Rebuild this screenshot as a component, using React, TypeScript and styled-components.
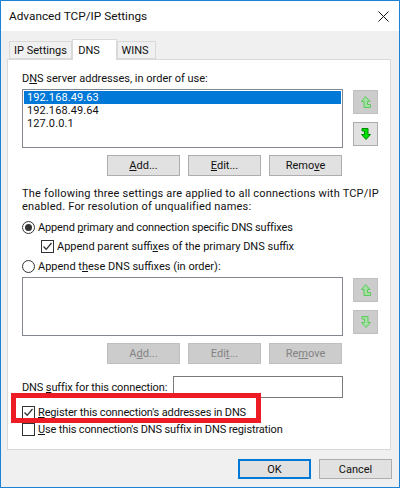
import styled, { createGlobalStyle } from "styled-components";

const GlobalStyle = createGlobalStyle`
  html, body {
    margin: 0;
    padding: 0;
    background: #f0f0f0;
  }
  * {
    box-sizing: border-box;
  }
`;

const Win = styled.div`
  position: relative;
  width: 400px;
  height: 488px;
  display: flex;
  flex-direction: column;
  background: #f0f0f0;
  border: 1px solid #1883d7;
  font-family: Roboto, "Liberation Sans", sans-serif;
  font-size: 11px;
  line-height: 13px;
  color: #111;
`;

const TitleBar = styled.div`
  height: 30px;
  display: flex;
  align-items: center;
  justify-content: space-between;
  background: #fff;
  padding: 0 10px 0 8px;
  font-size: 11.8px;
`;

const TabStrip = styled.div`
  display: flex;
  align-items: flex-end;
  height: 28px;
  margin-left: 8px;
`;

const Tab = styled.div<{ $active?: boolean; $w: number; $shift?: number }>`
  position: relative;
  width: ${(p) => p.$w}px;
  height: ${(p) => (p.$active ? 21 : 18)}px;
  margin-bottom: ${(p) => (p.$active ? -1 : 0)}px;
  padding-right: ${(p) => p.$shift || 0}px;
  display: flex;
  align-items: center;
  justify-content: center;
  background: ${(p) => (p.$active ? "#fff" : "#f0f0f0")};
  border: 1px solid #d9d9d9;
  border-bottom: ${(p) => (p.$active ? "none" : "1px solid #d9d9d9")};
  z-index: ${(p) => (p.$active ? 1 : 0)};
`;

const Panel = styled.div`
  width: 384px;
  height: 391px;
  margin-left: 6px;
  padding: 12px 0 0 14px;
  background: #fff;
  border: 1px solid #d9d9d9;
  display: flex;
  flex-direction: column;
`;

const Label = styled.div`
  height: 13px;
  white-space: nowrap;
`;

const ListRow = styled.div<{ $top: number }>`
  display: flex;
  gap: 10px;
  margin-top: ${(p) => p.$top}px;
`;

const ListBox = styled.div`
  width: 321px;
  height: 59px;
  padding: 1px;
  background: #fff;
  border: 1px solid #828790;
`;

const ListItem = styled.div<{ $selected?: boolean }>`
  height: 13px;
  padding-left: 3px;
  line-height: 13px;
  letter-spacing: 0.1px;
  color: ${(p) => (p.$selected ? "#fff" : "#111")};
  background: ${(p) => (p.$selected ? "#0078d7" : "transparent")};
`;

const ArrowColumn = styled.div`
  display: flex;
  flex-direction: column;
  gap: 8px;
  padding-top: 1px;
`;

const ArrowButton = styled.div<{ $dim?: boolean }>`
  width: 25px;
  height: 24px;
  display: flex;
  align-items: center;
  justify-content: center;
  background: ${(p) => (p.$dim ? "#cccccc" : "#e1e1e1")};
  border: 1px solid ${(p) => (p.$dim ? "#bfbfbf" : "#adadad")};
`;

const ButtonRow = styled.div`
  display: flex;
  justify-content: flex-end;
  gap: 8px;
  width: 320px;
  margin-top: 7px;
`;

const Button = styled.div<{ $disabled?: boolean; $primary?: boolean }>`
  width: 73px;
  height: 21px;
  display: flex;
  align-items: center;
  justify-content: center;
  background: ${(p) => (p.$disabled ? "#cccccc" : "#e1e1e1")};
  color: ${(p) => (p.$disabled ? "#838383" : "#111")};
  border: ${(p) =>
    p.$primary ? "2px solid #0078d7" : p.$disabled ? "1px solid #bfbfbf" : "1px solid #adadad"};
`;

const Para = styled.div`
  margin-top: 11px;
  white-space: nowrap;
  letter-spacing: 0.2px;
`;

const OptionRow = styled.div<{ $top: number; $indent?: number; $track?: number }>`
  display: flex;
  align-items: center;
  gap: 3px;
  height: 13px;
  margin-top: ${(p) => p.$top}px;
  margin-left: ${(p) => p.$indent || 0}px;
  letter-spacing: ${(p) => p.$track || 0}px;
  white-space: nowrap;
`;

const Radio = styled.span<{ $on?: boolean }>`
  width: 13px;
  height: 13px;
  flex: none;
  border-radius: 50%;
  border: 1px solid #333;
  background: #fff;
  display: flex;
  align-items: center;
  justify-content: center;
  &::after {
    content: "";
    width: 7px;
    height: 7px;
    border-radius: 50%;
    background: ${(p) => (p.$on ? "#333" : "transparent")};
  }
`;

const Check = styled.span`
  width: 13px;
  height: 13px;
  flex: none;
  border: 1px solid #333;
  background: #fff;
  display: flex;
`;

const SuffixRow = styled.div`
  display: flex;
  align-items: center;
  justify-content: space-between;
  width: 321px;
  height: 22px;
  margin-top: 12px;
  letter-spacing: -0.12px;
  white-space: nowrap;
`;

const SuffixInput = styled.div`
  width: 170px;
  height: 22px;
  background: #fff;
  border: 1px solid #7a7a7a;
`;

const Footer = styled.div`
  display: flex;
  justify-content: flex-end;
  gap: 8px;
  margin-top: 9px;
  padding-right: 7px;
`;

const DialogButton = styled(Button)`
  height: 20px;
`;

const Highlight = styled.div`
  position: absolute;
  left: 10px;
  top: 392px;
  width: 250px;
  height: 30px;
  border: 5px solid #ed1c24;
  pointer-events: none;
`;

const Key = styled.u`
  text-underline-offset: 1px;
`;

const CloseIcon = () => (
  <svg width="11" height="11" viewBox="0 0 11 11">
    <path d="M0.5 0.5L10.5 10.5M10.5 0.5L0.5 10.5" stroke="#111" strokeWidth="1" fill="none" />
  </svg>
);

const Tick = () => (
  <svg width="11" height="11" viewBox="0 0 11 11">
    <path d="M1.5 5.5L4.2 8.3L9.5 2" stroke="#333" strokeWidth="1.3" fill="none" />
  </svg>
);

const ArrowIcon = ({ down, pale }: { down?: boolean; pale?: boolean }) => (
  <svg width="10" height="12" viewBox="0 0 10 12">
    <path
      d={
        down
          ? "M1 0.5H7V6.5H9.5L5 11.5L0.5 6.5H3.5V3H1Z"
          : "M4.5 0.5L9 5.5H6.5V8.5H9.5V11.5H3V5.5H0.5Z"
      }
      fill={pale || !down ? "#a5dfa5" : "#00e000"}
      stroke={pale || !down ? "#5acb5a" : "#008a00"}
      strokeWidth="1"
    />
  </svg>
);

const App = () => {
  return (
    <>
      <GlobalStyle />
      <Win>
        <TitleBar>
          <span>Advanced TCP/IP Settings</span>
          <CloseIcon />
        </TitleBar>
        <TabStrip>
          <Tab $w={63}>IP Settings</Tab>
          <Tab $active $w={45} $shift={11}>DNS</Tab>
          <Tab $w={39} $shift={3}>WINS</Tab>
        </TabStrip>
        <Panel>
          <Label>
            D<Key>N</Key>S server addresses, in order of use:
          </Label>
          <ListRow $top={4}>
            <ListBox>
              <ListItem $selected>192.168.49.63</ListItem>
              <ListItem>192.168.49.64</ListItem>
              <ListItem>127.0.0.1</ListItem>
            </ListBox>
            <ArrowColumn>
              <ArrowButton $dim><ArrowIcon /></ArrowButton>
              <ArrowButton><ArrowIcon down /></ArrowButton>
            </ArrowColumn>
          </ListRow>
          <ButtonRow>
            <Button><span><Key>A</Key>dd...</span></Button>
            <Button><span><Key>E</Key>dit...</span></Button>
            <Button><span>Remo<Key>v</Key>e</span></Button>
          </ButtonRow>
          <Para>
            The following three settings are applied to all connections with TCP/IP
            <br />
            enabled. For resolution of unqualified names:
          </Para>
          <OptionRow $top={8} $track={-0.16}>
            <Radio $on />
            <span>Append <Key>p</Key>rimary and connection specific DNS suffixes</span>
          </OptionRow>
          <OptionRow $top={6} $indent={19}>
            <Check><Tick /></Check>
            <span>Append parent suffi<Key>x</Key>es of the primary DNS suffix</span>
          </OptionRow>
          <OptionRow $top={7}>
            <Radio />
            <span>Append t<Key>h</Key>ese DNS suffixes (in order):</span>
          </OptionRow>
          <ListRow $top={4}>
            <ListBox />
            <ArrowColumn>
              <ArrowButton $dim><ArrowIcon pale /></ArrowButton>
              <ArrowButton $dim><ArrowIcon down pale /></ArrowButton>
            </ArrowColumn>
          </ListRow>
          <ButtonRow>
            <Button $disabled><span>A<Key>d</Key>d...</span></Button>
            <Button $disabled><span>Edi<Key>t</Key>...</span></Button>
            <Button $disabled><span>Re<Key>m</Key>ove</span></Button>
          </ButtonRow>
          <SuffixRow>
            <span>DNS <Key>s</Key>uffix for this connection:</span>
            <SuffixInput />
          </SuffixRow>
          <OptionRow $top={8} $track={-0.14}>
            <Check><Tick /></Check>
            <span><Key>R</Key>egister this connection's addresses in DNS</span>
          </OptionRow>
          <OptionRow $top={4} $track={-0.14}>
            <Check />
            <span><Key>U</Key>se this connection's DNS suffix in DNS registration</span>
          </OptionRow>
        </Panel>
        <Footer>
          <DialogButton $primary>OK</DialogButton>
          <DialogButton>Cancel</DialogButton>
        </Footer>
        <Highlight />
      </Win>
    </>
  );
};

export default App;
